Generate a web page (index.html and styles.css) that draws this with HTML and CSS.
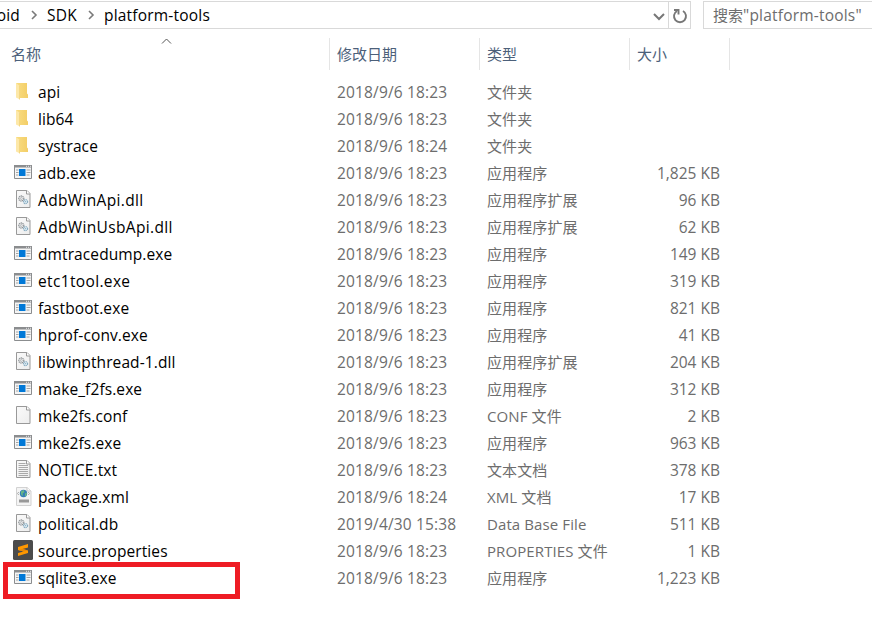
FILE: index.html
```html
<!DOCTYPE html>
<html lang="zh-CN">
<head>
  <meta charset="UTF-8">
  <title>platform-tools</title>
  <link rel="stylesheet" href="styles.css">
</head>
<body>
  <svg class="sprites" width="0" height="0">
    <defs>
      <linearGradient id="folder-fill" x1="0" x2="1">
        <stop offset="0" stop-color="#f9dd83"/>
        <stop offset="1" stop-color="#f3ce67"/>
      </linearGradient>
      <linearGradient id="paper-fill" x1="0" y1="0" x2="1" y2="1">
        <stop offset="0" stop-color="#fafafa"/>
        <stop offset="1" stop-color="#ededed"/>
      </linearGradient>
    </defs>
    <symbol id="folder" viewBox="0 0 20 20">
      <path d="M3 2h11v10.500l1 1V17H4z" fill="url(#folder-fill)"/>
      <path d="M3 2l4 3v13.500L3 16.500z" fill="#fde8a8"/>
      <path d="M6.500 4.800V18.500" stroke="#eecb68" stroke-width=".6"/>
    </symbol>
    <symbol id="exe" viewBox="0 0 20 20">
      <path d="M1.500 3.500h17v13h-17z" fill="#f5f5f5" stroke="#8b8d8f"/>
      <path d="M1 3h18v2.500H1z" fill="#8b8d8f"/>
      <path d="M13 4.300h1M15 4.300h1M17 4.300h1" stroke="#e8e8e8"/>
      <path d="M3 8h2.500M3 10.500h2.500M3 13h2.500M13.500 8h4M13.500 10.500h4M13.500 13h3" stroke="#a4a4a4"/>
      <path d="M6 7h6.500v7H6z" fill="#0078d7"/>
    </symbol>
    <symbol id="paper" viewBox="0 0 20 20">
      <path d="M3.500 1.500h10.500l3 3v14h-13.500z" fill="url(#paper-fill)" stroke="#999"/>
      <path d="M13.500 1.500v3.500h3.500" fill="#fff" stroke="#999"/>
    </symbol>
    <symbol id="dll" viewBox="0 0 20 20">
      <use href="#paper"/>
      <circle cx="8.300" cy="9.500" r="2.500" fill="none" stroke="#8d9296" stroke-width="1.300" stroke-dasharray="1.300 .5"/>
      <circle cx="8.300" cy="9.500" r="1" fill="none" stroke="#92979b" stroke-width=".6"/>
      <circle cx="12.600" cy="12.700" r="2" fill="#e4f0f6" stroke="#86abc0" stroke-width="1.200" stroke-dasharray="1.200 .5"/>
      <circle cx="12.600" cy="12.700" r=".6" fill="#86abc0"/>
    </symbol>
    <symbol id="txt" viewBox="0 0 20 20">
      <use href="#paper"/>
      <path d="M5.500 4.500h7M5.500 6.500h9.500M5.500 8.500h9.500M5.500 10.500h9.500M5.500 12.500h9.500M5.500 14.500h9.500M5.500 16.500h9.500" stroke="#a0a0a0" stroke-width=".9"/>
    </symbol>
    <symbol id="xml" viewBox="0 0 20 20">
      <path d="M3.500 1.500h10.500l4 3.500v14.500h-14.500z" fill="#f4f4f4" stroke="#d2d2d2"/>
      <path d="M14 1.500v3.500h3.500" fill="#fff" stroke="#c6c6c6"/>
      <circle cx="10.500" cy="7.500" r="3.700" fill="#357fb4"/>
      <path d="M8 5.500l2.500-1.500 1 2-2 1.500.5 2.500-2-1.500zM12 7.500l2-1-.5 3-1.500 1z" fill="#69b785"/>
      <path d="M5.800 6L4.500 7.500l1.300 1.500M15.200 6L16.500 7.500l-1.300 1.500" fill="none" stroke="#aaa"/>
      <path d="M6 13.500h10v3H6z" fill="#999"/>
    </symbol>
    <symbol id="sublime" viewBox="0 0 20 20">
      <path d="M0 1.500Q0 0 1.500 0h17Q20 0 20 1.500v17q0 1.500-1.500 1.500h-17Q0 20 0 18.500z" fill="#4b4b4b"/>
      <path d="M5 7l10-3v3.500L9.500 9 15 10.500v2.500L5 16v-3l5.500-1.500L5 10z" fill="#ff9800"/>
      <path d="M9.500 9l5.500 1.500-4.500 1L5 10z" fill="#e98a0a"/>
    </symbol>
  </svg>

  <div class="toolbar">
    <div class="address-bar">
      <div class="crumbs">
        <span class="crumb crumb-cut">oid</span>
        <svg class="arrow" viewBox="0 0 7 10"><path d="M1 1l4 4-4 4"/></svg>
        <span class="crumb crumb-sdk">SDK</span>
        <svg class="arrow" viewBox="0 0 7 10"><path d="M1 1l4 4-4 4"/></svg>
        <span class="crumb">platform-tools</span>
      </div>
      <svg class="dropdown" viewBox="0 0 12 8"><path d="M1 1l5 5 5-5"/></svg>
      <div class="refresh">
        <svg viewBox="0 0 16 16"><path d="M11 3A6 6 0 1 1 5 3"/><path d="M2 2h4.500v4.500"/></svg>
      </div>
    </div>
    <div class="search-box">搜索<span class="query">"platform-tools"</span></div>
  </div>

  <div class="header">
    <div class="col name">名称<svg class="sort" viewBox="0 0 11 6"><path d="M1 5.500L5.500 1 10 5.500"/></svg></div>
    <div class="col date">修改日期</div>
    <div class="col type">类型</div>
    <div class="col size">大小</div>
  </div>

  <div class="files">
    <div class="row"><svg class="icon"><use href="#folder"/></svg><span class="file-name">api</span><span class="file-date">2018/9/6 18:23</span><span class="file-type">文件夹</span><span class="file-size"></span></div>
    <div class="row"><svg class="icon"><use href="#folder"/></svg><span class="file-name">lib64</span><span class="file-date">2018/9/6 18:23</span><span class="file-type">文件夹</span><span class="file-size"></span></div>
    <div class="row"><svg class="icon"><use href="#folder"/></svg><span class="file-name">systrace</span><span class="file-date">2018/9/6 18:24</span><span class="file-type">文件夹</span><span class="file-size"></span></div>
    <div class="row"><svg class="icon"><use href="#exe"/></svg><span class="file-name">adb.exe</span><span class="file-date">2018/9/6 18:23</span><span class="file-type">应用程序</span><span class="file-size">1,825 KB</span></div>
    <div class="row"><svg class="icon"><use href="#dll"/></svg><span class="file-name wide">AdbWinApi.dll</span><span class="file-date">2018/9/6 18:23</span><span class="file-type">应用程序扩展</span><span class="file-size">96 KB</span></div>
    <div class="row"><svg class="icon"><use href="#dll"/></svg><span class="file-name wide">AdbWinUsbApi.dll</span><span class="file-date">2018/9/6 18:23</span><span class="file-type">应用程序扩展</span><span class="file-size">62 KB</span></div>
    <div class="row"><svg class="icon"><use href="#exe"/></svg><span class="file-name">dmtracedump.exe</span><span class="file-date">2018/9/6 18:23</span><span class="file-type">应用程序</span><span class="file-size">149 KB</span></div>
    <div class="row"><svg class="icon"><use href="#exe"/></svg><span class="file-name wide">etc1tool.exe</span><span class="file-date">2018/9/6 18:23</span><span class="file-type">应用程序</span><span class="file-size">319 KB</span></div>
    <div class="row"><svg class="icon"><use href="#exe"/></svg><span class="file-name">fastboot.exe</span><span class="file-date">2018/9/6 18:23</span><span class="file-type">应用程序</span><span class="file-size">821 KB</span></div>
    <div class="row"><svg class="icon"><use href="#exe"/></svg><span class="file-name">hprof-conv.exe</span><span class="file-date">2018/9/6 18:23</span><span class="file-type">应用程序</span><span class="file-size">41 KB</span></div>
    <div class="row"><svg class="icon"><use href="#dll"/></svg><span class="file-name">libwinpthread-1.dll</span><span class="file-date">2018/9/6 18:23</span><span class="file-type">应用程序扩展</span><span class="file-size">204 KB</span></div>
    <div class="row"><svg class="icon"><use href="#exe"/></svg><span class="file-name">make_f2fs.exe</span><span class="file-date">2018/9/6 18:23</span><span class="file-type">应用程序</span><span class="file-size">312 KB</span></div>
    <div class="row"><svg class="icon"><use href="#paper"/></svg><span class="file-name">mke2fs.conf</span><span class="file-date">2018/9/6 18:23</span><span class="file-type">CONF 文件</span><span class="file-size">2 KB</span></div>
    <div class="row"><svg class="icon"><use href="#exe"/></svg><span class="file-name">mke2fs.exe</span><span class="file-date">2018/9/6 18:23</span><span class="file-type">应用程序</span><span class="file-size">963 KB</span></div>
    <div class="row"><svg class="icon"><use href="#txt"/></svg><span class="file-name">NOTICE.txt</span><span class="file-date">2018/9/6 18:23</span><span class="file-type">文本文档</span><span class="file-size">378 KB</span></div>
    <div class="row"><svg class="icon"><use href="#xml"/></svg><span class="file-name">package.xml</span><span class="file-date">2018/9/6 18:24</span><span class="file-type">XML 文档</span><span class="file-size">17 KB</span></div>
    <div class="row"><svg class="icon"><use href="#dll"/></svg><span class="file-name">political.db</span><span class="file-date">2019/4/30 15:38</span><span class="file-type">Data Base File</span><span class="file-size">511 KB</span></div>
    <div class="row"><svg class="icon"><use href="#sublime"/></svg><span class="file-name">source.properties</span><span class="file-date">2018/9/6 18:23</span><span class="file-type">PROPERTIES 文件</span><span class="file-size">1 KB</span></div>
    <div class="row marked"><svg class="icon"><use href="#exe"/></svg><span class="file-name">sqlite3.exe</span><span class="file-date">2018/9/6 18:23</span><span class="file-type">应用程序</span><span class="file-size">1,223 KB</span></div>
  </div>
</body>
</html>
```

FILE: styles.css
```css
* {
  box-sizing: border-box;
}

body {
  margin: 0;
  height: 632px;
  overflow: hidden;
  background: #fff;
  color: #000;
  font-family: "Open Sans", "Noto Sans CJK SC", sans-serif;
  font-size: 15px;
  white-space: nowrap;
}

svg {
  flex: none;
  fill: none;
}

.sprites {
  display: block;
}

/* address bar and search */
.toolbar {
  display: flex;
  gap: 12px;
  padding-top: 1px;
}

.address-bar {
  display: flex;
  align-items: center;
  width: 691px;
  height: 28px;
  border: 1px solid #d9d9d9;
  border-left: 0;
}

.crumbs {
  display: flex;
  align-items: center;
  flex: 1;
  font-size: 15.5px;
  line-height: 26px;
  letter-spacing: 0.2px;
}

.crumb-cut {
  display: flex;
  justify-content: flex-end;
  width: 20px;
}

.crumb-sdk {
  width: 30px;
}

.arrow {
  width: 7px;
  height: 10px;
  margin: 0 9px 1px 11px;
  stroke: #7a7a7a;
  stroke-width: 1.6;
}

.dropdown {
  width: 12px;
  height: 8px;
  margin: 4px 3px 0 0;
  stroke: #777;
  stroke-width: 2;
}

.refresh {
  display: flex;
  align-items: center;
  justify-content: center;
  width: 22px;
  height: 26px;
  border-left: 1px solid #d9d9d9;
}

.refresh svg {
  width: 16px;
  height: 16px;
  margin: 1px 0 0 1px;
  stroke: #777;
  stroke-width: 1.9;
}

.search-box {
  flex: 1;
  height: 28px;
  padding-left: 9px;
  border: 1px solid #d9d9d9;
  border-right: 0;
  color: #6d6d6d;
  line-height: 26px;
}

.query {
  font-size: 15.5px;
  letter-spacing: 0.2px;
}

/* column headings */
.header {
  display: flex;
  height: 32px;
  margin-top: 9px;
  color: #4c607a;
  line-height: 32px;
}

.col {
  padding-left: 7px;
  border-right: 1px solid #e5e5e5;
}

.header .name {
  position: relative;
  width: 330px;
  padding-left: 11px;
}

.sort {
  position: absolute;
  left: 161px;
  top: 0;
  width: 11px;
  height: 6px;
  stroke: #555;
}

.header .date,
.header .type {
  width: 150px;
}

.header .size {
  width: 100px;
}

/* file list */
.files {
  padding-top: 9px;
}

.row {
  display: flex;
  position: relative;
  height: 27px;
  padding-left: 13px;
  color: #6d6d6d;
  line-height: 27px;
}

.icon {
  width: 20px;
  height: 20px;
  margin: 2px 5px 0 0;
}

.file-name {
  width: 299px;
  color: #000;
  font-size: 15.5px;
  letter-spacing: 0.1px;
}

.file-name.wide {
  letter-spacing: 0.35px;
}

.file-date {
  width: 150px;
  font-size: 15.5px;
  letter-spacing: 0.16px;
}

.file-type {
  width: 133px;
  letter-spacing: 0.1px;
}

.file-size {
  width: 100px;
  font-size: 15.5px;
  text-align: right;
}

/* red frame round the highlighted file */
.marked::after {
  content: "";
  box-sizing: border-box;
  position: absolute;
  left: 3px;
  top: -3px;
  width: 237px;
  height: 37px;
  border: 5px solid #ee1c24;
}
```
